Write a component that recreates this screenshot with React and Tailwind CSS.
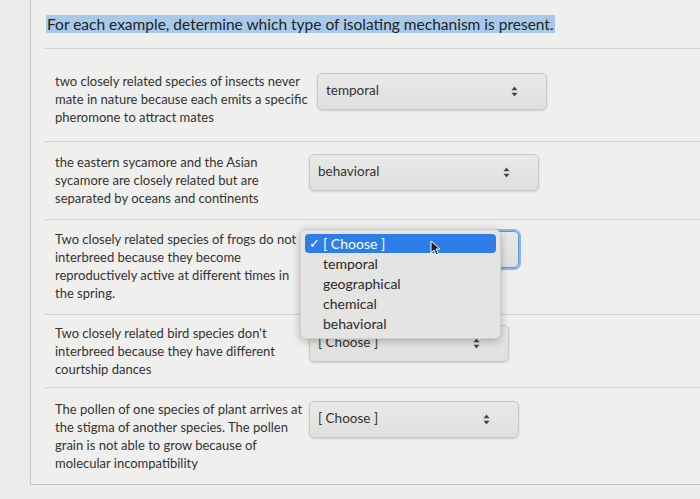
import React from 'react';

const rows = [
  {
    text: 'two closely related species of insects never mate in nature because each emits a specific pheromone to attract mates',
    value: 'temporal',
    pt: 'pt-[23px]',
    pb: 'pb-[15px]',
    width: 'w-[230px]',
    textWidth: 'w-[260px]',
  },
  {
    text: 'the eastern sycamore and the Asian sycamore are closely related but are separated by oceans and continents',
    value: 'behavioral',
    pt: 'pt-[11px]',
    pb: 'pb-[12px]',
    width: 'w-[230px]',
    textWidth: 'w-[252px]',
  },
  {
    text: 'Two closely related species of frogs do not interbreed because they become reproductively active at different times in the spring.',
    value: '',
    pt: 'pt-[10px]',
    pb: 'pb-[12px]',
    width: 'w-[210px]',
    textWidth: 'w-[252px]',
    open: true,
  },
  {
    text: "Two closely related bird species don't interbreed because they have different courtship dances",
    value: '[ Choose ]',
    pt: 'pt-[9px]',
    pb: 'pb-[9px]',
    width: 'w-[200px]',
    textWidth: 'w-[252px]',
  },
  {
    text: 'The pollen of one species of plant arrives at the stigma of another species. The pollen grain is not able to grow because of molecular incompatibility',
    value: '[ Choose ]',
    pt: 'pt-[12px]',
    pb: 'pb-[20px]',
    width: 'w-[210px]',
    textWidth: 'w-[252px]',
  },
];

const options = ['temporal', 'geographical', 'chemical', 'behavioral'];

function Arrows() {
  return (
    <svg width="7" height="11" viewBox="0 0 7 11" className="shrink-0">
      <path d="M3.5 0.5 L6.5 4.3 L0.5 4.3 Z" fill="#444" />
      <path d="M3.5 10.5 L6.5 6.7 L0.5 6.7 Z" fill="#444" />
    </svg>
  );
}

function Select({ value, width, open }) {
  return (
    <div className="relative mt-[1px] shrink-0">
      <div
        className={`${width} h-[37px] flex items-center justify-between rounded-[5px] border pl-[8px] pr-[28px] bg-gradient-to-b from-[#e9e9e8] to-[#dfdfde] shadow-[0_1px_2px_rgba(0,0,0,0.15)] ${
          open ? 'border-[#5b95e6] ring-2 ring-[#8db6ee]' : 'border-[#c9c9c8]'
        }`}
      >
        <span className="text-[13.5px] text-[#333] -mt-[3px]">{value}</span>
        <Arrows />
      </div>
      {open && (
        <div className="absolute -left-[9px] -top-[2px] w-[201px] rounded-[6px] bg-[#e4e4e3] shadow-[0_2px_8px_rgba(0,0,0,0.28)] border border-[#cfcfce] p-[4px] pb-[5px]">
          <div className="flex items-center h-[19px] rounded-[4px] bg-[#2f7de6] text-white text-[14px] pl-[4px]">
            <span className="w-[14px] text-[13px]">✓</span>
            <span>[ Choose ]</span>
            <svg width="12" height="16" viewBox="0 0 12 16" className="ml-[45px] mt-[8px]">
              <path d="M1 1 L1 13 L4 10 L6.5 15 L8.5 14 L6 9 L10 9 Z" fill="#222" stroke="#fff" strokeWidth="1" />
            </svg>
          </div>
          {options.map((o) => (
            <div key={o} className="h-[20px] flex items-center pl-[18px] text-[14px] text-[#2a2a2a]">
              {o}
            </div>
          ))}
        </div>
      )}
    </div>
  );
}

export default function App() {
  return (
    <div className="w-[700px] h-[499px] overflow-hidden bg-[#ececeb] font-['Lato','Liberation_Sans',sans-serif]">
      <div className="ml-[30px] w-[670px] h-[485px] border-l border-b border-[#c4c4c3] bg-[#efefee] pl-[14px]">
        <div className="pt-[12px] pb-[12px] pl-[1px] border-b border-[#d0d0cf]">
          <span className="bg-[#a9c9ea] text-[15.5px] text-[#222] leading-[22px] px-[1px]">
            For each example, determine which type of isolating mechanism is present.
          </span>
        </div>
        {rows.map((r, i) => (
          <div
            key={i}
            className={`flex items-start gap-[2px] pl-[10px] ${r.pt} ${r.pb} ${
              i < rows.length - 1 ? 'border-b border-[#d0d0cf]' : ''
            } ${r.open ? 'relative z-10' : ''}`}
          >
            <p className={`${r.textWidth} shrink-0 text-[13px] leading-[18px] text-[#333]`}>{r.text}</p>
            <Select value={r.value} width={r.width} open={r.open} />
          </div>
        ))}
      </div>
    </div>
  );
}
